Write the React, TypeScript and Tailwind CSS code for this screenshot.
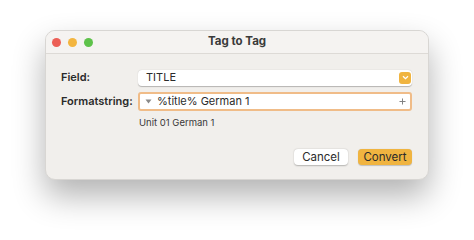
import { Plus } from "lucide-react";

const font = { fontFamily: '"Inter", "Liberation Sans", sans-serif' };

const App = () => {
  return (
    <div className="w-[474px] h-[240px] bg-white pt-[30px] pl-[45px]" style={font}>
      <div className="w-[384px] h-[150px] rounded-[10px] bg-[#f1efec] border border-[#d8d6d3] shadow-[0_16px_32px_rgba(0,0,0,0.3)] flex flex-col overflow-hidden">
        {/* Title bar */}
        <div className="h-[23px] shrink-0 flex items-center relative border-b border-[#dddad6] bg-[#f5f3f1]">
          <div className="flex items-center gap-[7px] pl-[6px]">
            <span className="w-[9px] h-[9px] rounded-full bg-[#ec5f56]" />
            <span className="w-[9px] h-[9px] rounded-full bg-[#f3b53f]" />
            <span className="w-[9px] h-[9px] rounded-full bg-[#5ec24a]" />
          </div>
          <div className="absolute inset-0 flex items-center justify-center text-[11.5px] font-bold text-[#3a3a3a]">
            Tag to Tag
          </div>
        </div>

        {/* Form */}
        <div className="flex-1 flex flex-col pl-[15px] pr-[16px] pt-[15px]">
          <div className="flex items-center h-[17px]">
            <div className="w-[77px] text-[11px] font-semibold text-[#2a2a2a]">Field:</div>
            <div className="flex-1 h-[16px] bg-white rounded-[4px] shadow-[0_0.5px_1px_rgba(0,0,0,0.25)] flex items-center pl-[8px] pr-[1px]">
              <span className="flex-1 text-[11px] text-[#2b2b2b]">TITLE</span>
              <span className="w-[12px] h-[12px] rounded-[3px] bg-[#f0b440] flex items-center justify-center">
                <svg width="7" height="5" viewBox="0 0 7 5">
                  <path d="M1 1.2 L3.5 3.7 L6 1.2" fill="none" stroke="white" strokeWidth="1.3" />
                </svg>
              </span>
            </div>
          </div>

          <div className="flex items-center mt-[6px] h-[19px]">
            <div className="w-[77px] text-[11px] font-semibold text-[#2a2a2a]">Formatstring:</div>
            <div className="flex-1 h-[19px] bg-white rounded-[3px] border-2 border-[#f0bc88] flex items-center pl-[5px] pr-[3px]">
              <svg width="7" height="5" viewBox="0 0 7 5" className="mr-[5px]">
                <path d="M0.5 0.5 L6.5 0.5 L3.5 4.5 Z" fill="#8a8a8a" />
              </svg>
              <span className="flex-1 text-[11px] text-[#2b2b2b]">%title% German 1</span>
              <Plus size={9} strokeWidth={2.5} className="text-[#7c7c7c]" />
            </div>
          </div>

          <div className="pl-[78px] mt-[5px] text-[9.5px] text-[#3a3a3a]">Unit 01 German 1</div>

          <div className="flex justify-end gap-[10px] mt-[19px]">
            <button className="w-[54px] h-[16px] rounded-[4px] bg-white shadow-[0_0.5px_1.5px_rgba(0,0,0,0.25)] text-[11.5px] text-[#2b2b2b] flex items-center justify-center">
              Cancel
            </button>
            <button className="w-[54px] h-[16px] rounded-[4px] bg-[#f0b440] shadow-[0_0.5px_1px_rgba(0,0,0,0.2)] text-[11.5px] text-[#2b2b2b] flex items-center justify-center">
              Convert
            </button>
          </div>
        </div>
      </div>
    </div>
  );
};

export default App;
